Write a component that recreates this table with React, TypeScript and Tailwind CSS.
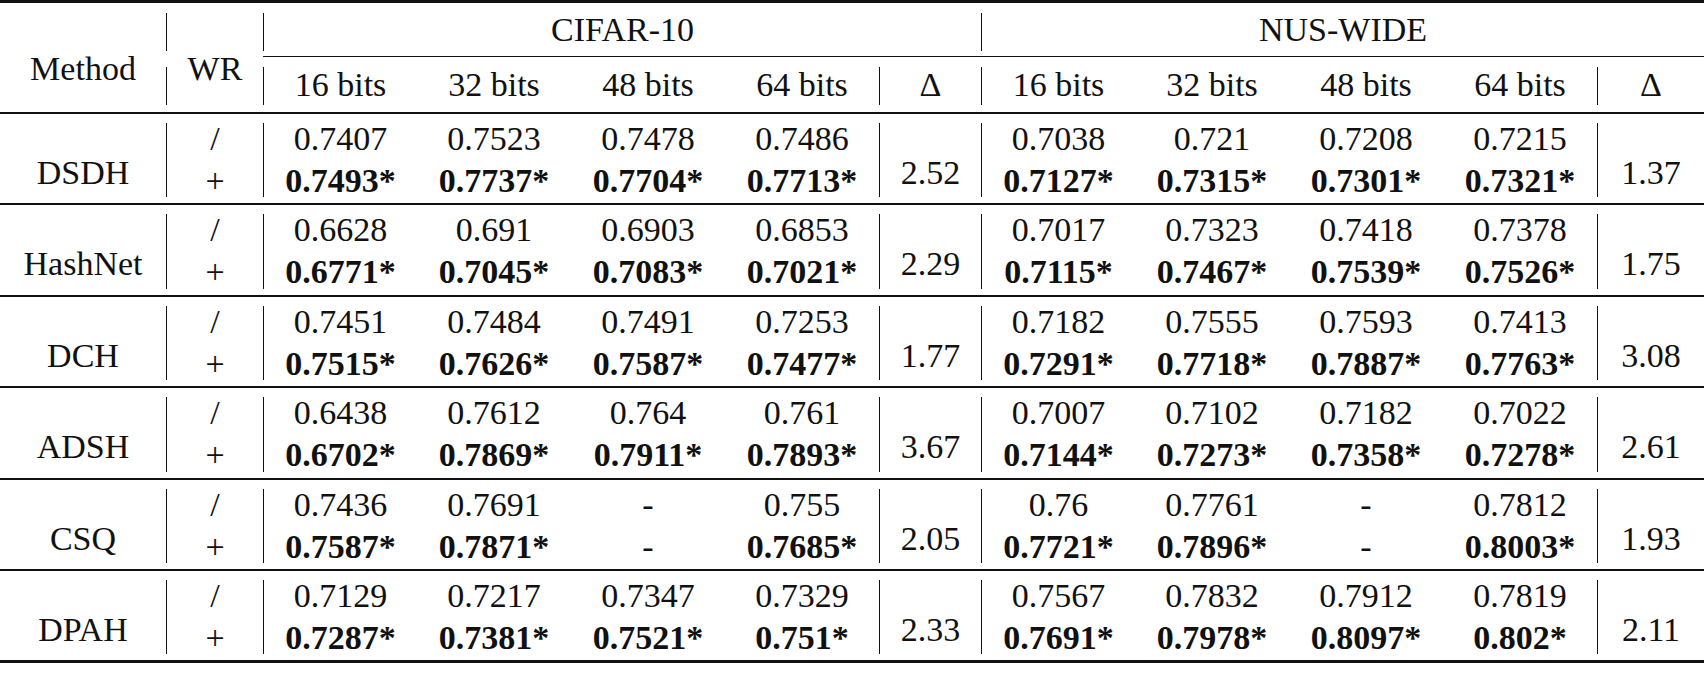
import React from "react";

type Pair = [string, string];

interface MethodRow {
  name: string;
  cifar: Pair[];
  cifarDelta: string;
  nus: Pair[];
  nusDelta: string;
}

const rows: MethodRow[] = [
  {
    name: "DSDH",
    cifar: [["0.7407", "0.7493*"], ["0.7523", "0.7737*"], ["0.7478", "0.7704*"], ["0.7486", "0.7713*"]],
    cifarDelta: "2.52",
    nus: [["0.7038", "0.7127*"], ["0.721", "0.7315*"], ["0.7208", "0.7301*"], ["0.7215", "0.7321*"]],
    nusDelta: "1.37",
  },
  {
    name: "HashNet",
    cifar: [["0.6628", "0.6771*"], ["0.691", "0.7045*"], ["0.6903", "0.7083*"], ["0.6853", "0.7021*"]],
    cifarDelta: "2.29",
    nus: [["0.7017", "0.7115*"], ["0.7323", "0.7467*"], ["0.7418", "0.7539*"], ["0.7378", "0.7526*"]],
    nusDelta: "1.75",
  },
  {
    name: "DCH",
    cifar: [["0.7451", "0.7515*"], ["0.7484", "0.7626*"], ["0.7491", "0.7587*"], ["0.7253", "0.7477*"]],
    cifarDelta: "1.77",
    nus: [["0.7182", "0.7291*"], ["0.7555", "0.7718*"], ["0.7593", "0.7887*"], ["0.7413", "0.7763*"]],
    nusDelta: "3.08",
  },
  {
    name: "ADSH",
    cifar: [["0.6438", "0.6702*"], ["0.7612", "0.7869*"], ["0.764", "0.7911*"], ["0.761", "0.7893*"]],
    cifarDelta: "3.67",
    nus: [["0.7007", "0.7144*"], ["0.7102", "0.7273*"], ["0.7182", "0.7358*"], ["0.7022", "0.7278*"]],
    nusDelta: "2.61",
  },
  {
    name: "CSQ",
    cifar: [["0.7436", "0.7587*"], ["0.7691", "0.7871*"], ["-", "-"], ["0.755", "0.7685*"]],
    cifarDelta: "2.05",
    nus: [["0.76", "0.7721*"], ["0.7761", "0.7896*"], ["-", "-"], ["0.7812", "0.8003*"]],
    nusDelta: "1.93",
  },
  {
    name: "DPAH",
    cifar: [["0.7129", "0.7287*"], ["0.7217", "0.7381*"], ["0.7347", "0.7521*"], ["0.7329", "0.751*"]],
    cifarDelta: "2.33",
    nus: [["0.7567", "0.7691*"], ["0.7832", "0.7978*"], ["0.7912", "0.8097*"], ["0.7819", "0.802*"]],
    nusDelta: "2.11",
  },
];

const heights = ["h-[91px]", "h-[92px]", "h-[91px]", "h-[92px]", "h-[91px]", "h-[92px]"];

// 17 tracks: Method | WR | 4 x CIFAR | Δ | 4 x NUS | Δ, with 1px tracks for the vertical rules
const cols =
  "grid grid-cols-[166px_1px_96px_1px_153px_154px_154px_154px_1px_101px_1px_153px_154px_154px_154px_1px_106px]";

const bits = ["16 bits", "32 bits", "48 bits", "64 bits"];

function Rule({ className = "" }: { className?: string }) {
  return <div className={`w-px bg-[#111] ${className}`} />;
}

function Values({ pair }: { pair: Pair }) {
  const [plain, ours] = pair;
  return (
    <div className="flex flex-col items-center justify-center leading-[42px] pt-[2px]">
      <span>{plain}</span>
      <span className={ours === "-" ? "" : "font-bold"}>{ours}</span>
    </div>
  );
}

function Single({ children }: { children: React.ReactNode }) {
  return <div className="flex items-center justify-center pt-[28px] leading-[42px]">{children}</div>;
}

function Header() {
  return (
    <div className={`${cols} grid-rows-[53px_1px_55px] border-t-[3px] border-b-2 border-[#111]`}>
      <div className="col-start-1 row-start-1 row-span-3 flex items-center justify-center pt-[22px]">Method</div>
      <Rule className="col-start-2 row-start-1 mt-[10px] mb-[5px]" />
      <Rule className="col-start-2 row-start-3 mt-[10px] mb-[7px]" />
      <div className="col-start-3 row-start-1 row-span-3 flex items-center justify-center pt-[22px]">WR</div>
      <Rule className="col-start-4 row-start-1 mt-[10px] mb-[5px]" />
      <Rule className="col-start-4 row-start-3 mt-[10px] mb-[7px]" />

      <div className="col-start-5 col-span-6 row-start-1 flex items-center justify-center pt-[1px]">CIFAR-10</div>
      <Rule className="col-start-11 row-start-1 mt-[10px] mb-[5px]" />
      <div className="col-start-12 col-span-6 row-start-1 flex items-center justify-center pt-[1px]">NUS-WIDE</div>

      {/* cmidrule under the dataset names */}
      <div className="col-start-4 col-span-14 row-start-2 bg-[#111]" />

      {bits.map((b, i) => (
        <div key={`c${b}`} className={`row-start-3 flex items-center justify-center ${["col-start-5", "col-start-6", "col-start-7", "col-start-8"][i]}`}>
          {b}
        </div>
      ))}
      <Rule className="col-start-9 row-start-3 mt-[10px] mb-[7px]" />
      <div className="col-start-10 row-start-3 flex items-center justify-center">Δ</div>
      <Rule className="col-start-11 row-start-3 mt-[10px] mb-[7px]" />
      {bits.map((b, i) => (
        <div key={`n${b}`} className={`row-start-3 flex items-center justify-center ${["col-start-12", "col-start-13", "col-start-14", "col-start-15"][i]}`}>
          {b}
        </div>
      ))}
      <Rule className="col-start-16 row-start-3 mt-[10px] mb-[7px]" />
      <div className="col-start-17 row-start-3 flex items-center justify-center">Δ</div>
    </div>
  );
}

function DataRow({ row, last, height }: { row: MethodRow; last: boolean; height: string }) {
  const sep = "mt-[9px] mb-[6px]";
  return (
    <div className={`${cols} ${height} ${last ? "border-b-[3px]" : "border-b-2"} border-[#111]`}>
      <Single>{row.name}</Single>
      <Rule className={sep} />
      <div className="flex flex-col items-center justify-center leading-[42px] pt-[2px]">
        <span>/</span>
        <span>+</span>
      </div>
      <Rule className={sep} />
      {row.cifar.map((p, i) => (
        <Values key={`c${i}`} pair={p} />
      ))}
      <Rule className={sep} />
      <Single>{row.cifarDelta}</Single>
      <Rule className={sep} />
      {row.nus.map((p, i) => (
        <Values key={`n${i}`} pair={p} />
      ))}
      <Rule className={sep} />
      <Single>{row.nusDelta}</Single>
    </div>
  );
}

export default function App() {
  return (
    <div className="w-[1704px] h-[676px] bg-white text-[#111] [font-family:'Liberation_Serif',serif] text-[34px] leading-none overflow-hidden">
      <Header />
      {rows.map((r, i) => (
        <DataRow key={r.name} row={r} last={i === rows.length - 1} height={heights[i]} />
      ))}
    </div>
  );
}
